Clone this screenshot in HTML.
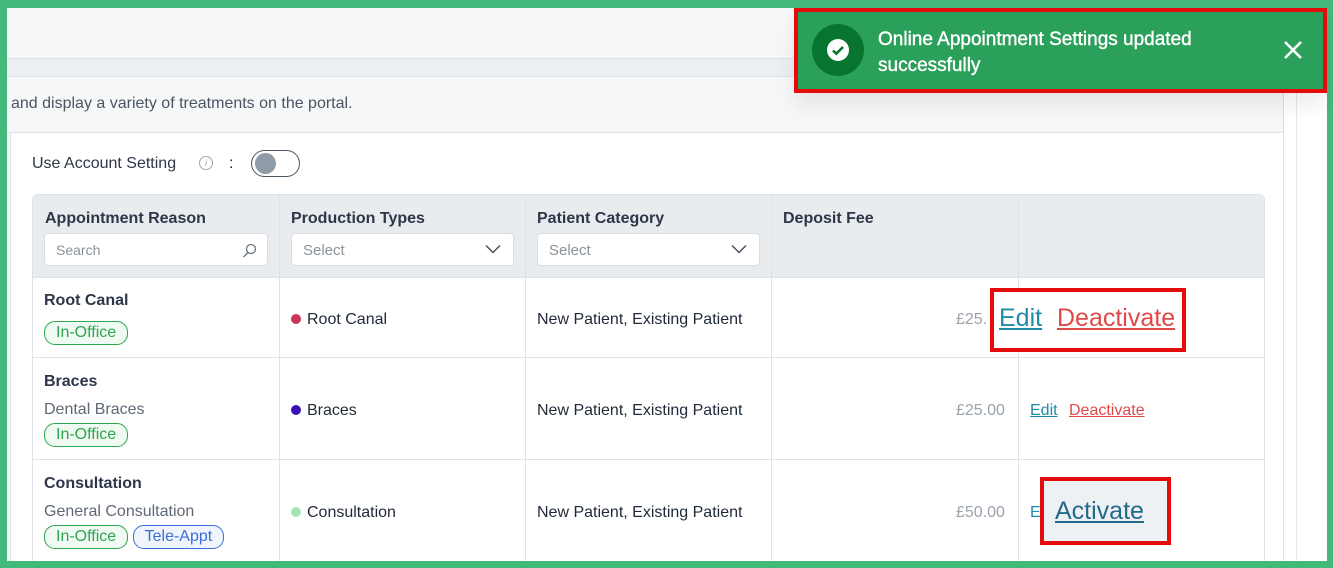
<!DOCTYPE html>
<html><head><meta charset="utf-8"><style>
*{box-sizing:border-box;margin:0;padding:0}
body{width:1333px;height:568px;overflow:hidden;background:#43b97a;font-family:"Liberation Sans",sans-serif;position:relative}
.abs{position:absolute}
.main{left:7px;top:8px;width:1320px;height:553px;background:#f5f7f9;overflow:hidden}
.t{color:#1f2937;font-size:16px;white-space:nowrap}
.th{font-weight:bold;color:#2d3748;font-size:16px}
.inp{background:#fff;border:1px solid #d8dde3;border-radius:4px;height:33px;color:#8a929c;font-size:15px;padding:8px 11px}
.pill{display:inline-block;border:1px solid #2ea44f;color:#2ea44f;background:#effaf2;border-radius:11px;font-size:16px;padding:1px 11px;height:24px;line-height:20px}
.pill.b{border-color:#3b6fd6;color:#3b6fd6;background:#f0f4fd}
.dot{display:inline-block;width:10px;height:10px;border-radius:5px;margin-right:6px;vertical-align:0}
.vl{position:absolute;top:0;bottom:0;width:1px;background:#dfe3e8}
.hl{position:absolute;left:0;right:0;height:1px;background:#dfe3e8}
.red{border:4px solid #e30b0b}
</style></head><body>
<div class="abs main">
  <div class="abs" style="left:0;top:50px;width:1320px;height:1px;background:#dfe3e8"></div>
  <div class="abs" style="left:0;top:51px;width:1276px;height:17px;background:#eceff2"></div>
  <div class="abs" style="left:0;top:68px;width:1276px;height:1px;background:#dfe3e8"></div>
  <div class="abs t" style="left:4px;top:87px;color:#4a5563;font-size:16px">and display a variety of treatments on the portal.</div>
  <div class="abs" style="left:0;top:124px;width:1276px;height:1px;background:#dfe3e8"></div>
  <div class="abs" style="left:1276px;top:51px;width:44px;height:502px;background:#fff;border-left:1px solid #dfe3e8"></div>
  <div class="abs" style="left:1289px;top:51px;width:1px;height:502px;background:#e6e9ed"></div>
  <div class="abs" style="left:3px;top:125px;width:1273px;height:430px;background:#fff;border-left:1px solid #dfe3e8"></div>
  <div class="abs t" style="left:25px;top:147px;color:#2d3748">Use Account Setting</div>
  <div class="abs" style="left:192px;top:148px;width:14px;height:14px;border:1px solid #a0a8b2;border-radius:7px;font-size:9px;color:#a0a8b2;text-align:center;line-height:12px;font-style:italic">i</div>
  <div class="abs t" style="left:222px;top:147px">:</div>
  <div class="abs" style="left:244px;top:142px;width:49px;height:27px;border:1px solid #4a5563;border-radius:14px;background:#fff"><div style="position:absolute;left:3px;top:2px;width:21px;height:21px;border-radius:11px;background:#8f9ba6"></div></div>
  <!-- table -->
  <div class="abs" style="left:25px;top:186px;width:1233px;height:380px;border:1px solid #dfe3e8;border-radius:6px 6px 0 0;overflow:hidden;background:#fff">
    <div class="abs" style="left:0;top:0;right:0;height:82px;background:#e9ecef"></div>
    <div class="hl" style="top:82px"></div><div class="hl" style="top:162px"></div><div class="hl" style="top:264px"></div>
    <div class="vl" style="left:246px"></div><div class="vl" style="left:492px"></div><div class="vl" style="left:738px"></div><div class="vl" style="left:985px"></div>
    <div class="abs th" style="left:12px;top:15px">Appointment Reason</div>
    <div class="abs th" style="left:258px;top:15px">Production Types</div>
    <div class="abs th" style="left:504px;top:15px">Patient Category</div>
    <div class="abs th" style="left:750px;top:15px">Deposit Fee</div>
    <div class="abs inp" style="left:11px;top:38px;width:224px;font-size:14px">Search<svg style="position:absolute;right:10px;top:9px" width="15" height="15" viewBox="0 0 15 15"><circle cx="9" cy="6" r="4.5" fill="none" stroke="#6b7480" stroke-width="1.3"/><path d="M6 9.5L1.5 14" stroke="#6b7480" stroke-width="1.4"/></svg></div>
    <div class="abs inp" style="left:258px;top:38px;width:223px">Select<svg style="position:absolute;right:12px;top:10px" width="16" height="10" viewBox="0 0 16 10"><path d="M1 1.5l7 7 7-7" fill="none" stroke="#4a5563" stroke-width="1.5"/></svg></div>
    <div class="abs inp" style="left:504px;top:38px;width:223px">Select<svg style="position:absolute;right:12px;top:10px" width="16" height="10" viewBox="0 0 16 10"><path d="M1 1.5l7 7 7-7" fill="none" stroke="#4a5563" stroke-width="1.5"/></svg></div>
    <!-- row1 -->
    <div class="abs th" style="left:11px;top:97px">Root Canal</div>
    <div class="abs" style="left:11px;top:126px"><span class="pill">In-Office</span></div>
    <div class="abs t" style="left:258px;top:116px"><span class="dot" style="background:#c7355a"></span>Root Canal</div>
    <div class="abs t" style="left:504px;top:116px">New Patient, Existing Patient</div>
    <div class="abs t" style="left:923px;top:116px;color:#9aa2ab">£25.</div>
    <!-- row2 -->
    <div class="abs th" style="left:11px;top:178px">Braces</div>
    <div class="abs t" style="left:11px;top:206px;color:#5f6975">Dental Braces</div>
    <div class="abs" style="left:11px;top:228px"><span class="pill">In-Office</span></div>
    <div class="abs t" style="left:258px;top:207px"><span class="dot" style="background:#3b12b8"></span>Braces</div>
    <div class="abs t" style="left:504px;top:207px">New Patient, Existing Patient</div>
    <div class="abs t" style="left:923px;top:207px;color:#9aa2ab">£25.00</div>
    <div class="abs t" style="left:997px;top:207px;color:#1f8ba8;text-decoration:underline">Edit</div>
    <div class="abs t" style="left:1036px;top:207px;color:#e04848;text-decoration:underline">Deactivate</div>
    <!-- row3 -->
    <div class="abs th" style="left:11px;top:280px">Consultation</div>
    <div class="abs t" style="left:11px;top:308px;color:#5f6975">General Consultation</div>
    <div class="abs" style="left:11px;top:330px"><span class="pill">In-Office</span> <span class="pill b">Tele-Appt</span></div>
    <div class="abs t" style="left:258px;top:309px"><span class="dot" style="background:#a6e3b4"></span>Consultation</div>
    <div class="abs t" style="left:504px;top:309px">New Patient, Existing Patient</div>
    <div class="abs t" style="left:923px;top:309px;color:#9aa2ab">£50.00</div>
    <div class="abs t" style="left:997px;top:309px;color:#1f8ba8">E</div>
  </div>
</div>
<!-- highlight boxes -->
<div class="abs red" style="left:990px;top:288px;width:196px;height:64px;background:#fff"><span class="abs" style="left:5px;top:12px;font-size:25px;color:#1f8ba8;text-decoration:underline">Edit</span><span class="abs" style="left:63px;top:12px;font-size:25px;color:#e04848;text-decoration:underline">Deactivate</span></div>
<div class="abs red" style="left:1040px;top:477px;width:131px;height:68px;background:#eef1f4"><span class="abs" style="left:11px;top:16px;font-size:25px;color:#256a8a;text-decoration:underline">Activate</span></div>
<!-- toast -->
<div class="abs red" style="left:794px;top:8px;width:533px;height:85px;background:#2ba05a;box-shadow:0 12px 20px rgba(0,0,0,.08)">
  <div class="abs" style="left:14px;top:12px;width:52px;height:52px;border-radius:26px;background:#07752f"></div>
  <svg class="abs" style="left:28px;top:26px" width="24" height="24" viewBox="0 0 24 24"><circle cx="12" cy="12" r="11" fill="#fff"/><path d="M7 12.5l3.3 3.2L17 9" fill="none" stroke="#07752f" stroke-width="2.6"/></svg>
  <div class="abs" style="left:80px;top:15px;color:#fff;font-size:19px;line-height:26px;-webkit-text-stroke:0.4px #fff">Online Appointment Settings updated<br>successfully</div>
  <svg class="abs" style="left:485px;top:28px" width="20" height="20" viewBox="0 0 20 20"><path d="M2 2L18 18M18 2L2 18" stroke="#fff" stroke-width="2.6"/></svg>
</div>
</body></html>
